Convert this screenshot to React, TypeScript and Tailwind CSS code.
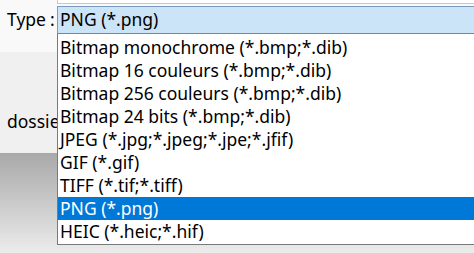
import React from 'react'

const formats = [
  'Bitmap monochrome (*.bmp;*.dib)',
  'Bitmap 16 couleurs (*.bmp;*.dib)',
  'Bitmap 256 couleurs (*.bmp;*.dib)',
  'Bitmap 24 bits (*.bmp;*.dib)',
  'JPEG (*.jpg;*.jpeg;*.jpe;*.jfif)',
  'GIF (*.gif)',
  'TIFF (*.tif;*.tiff)',
  'PNG (*.png)',
  'HEIC (*.heic;*.hif)',
]

const selected = 'PNG (*.png)'

export default function App() {
  return (
    <div
      className="relative w-[474px] h-[253px] overflow-hidden flex flex-col text-[17.5px] text-black"
      style={{ fontFamily: '"Noto Sans", "Open Sans", sans-serif' }}
    >
      {/* type row */}
      <div className="h-[52px] bg-[#f9f9f9] flex flex-col">
        <div className="ml-[57px] h-[4px] bg-white border-l border-b border-[#c8c8c8]" />
        <div className="flex items-center mt-[2px]">
          <div className="w-[57px] pl-[7px] leading-none whitespace-nowrap">Type<span className="tracking-[-0.5px]"> </span>:</div>
          <div className="flex-1 h-[28px] bg-[#cce4f7] border border-r-0 border-[#7a9cc0] border-b-[#5f8db5] pl-[2px] flex items-center leading-none">
            {selected}
          </div>
        </div>
      </div>

      {/* folder row, cut off by the list */}
      <div className="h-[101px] bg-[#f0f0f0] flex items-end pb-[23px]">
        <div className="w-[57px] pl-[7px] leading-none overflow-hidden whitespace-nowrap">dossier</div>
      </div>

      {/* window shadow */}
      <div className="flex-1 bg-gradient-to-b from-[#a9a9a9] to-[#ececec]" />

      {/* open dropdown list */}
      <ul className="absolute left-[57px] right-0 top-[34px] h-[211px] bg-white border-l border-b border-[#7a7a7a] pt-[2px]">
        {formats.map(f => (
          <li
            key={f}
            className={
              'h-[23px] pl-[2px] flex items-center leading-none whitespace-nowrap ' +
              (f === selected ? 'bg-[#0078d7] text-white' : '')
            }
          >
            {f}
          </li>
        ))}
      </ul>
    </div>
  )
}
